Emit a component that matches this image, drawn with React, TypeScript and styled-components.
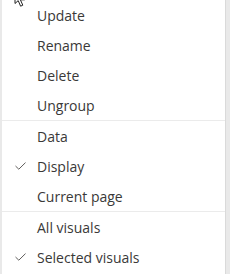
import styled, { createGlobalStyle } from 'styled-components'

const GlobalStyle = createGlobalStyle`
  html, body {
    margin: 0;
    padding: 0;
    background: #e6e6e6;
  }
  body {
    font-family: 'Segoe UI', 'Open Sans', 'Liberation Sans', sans-serif;
  }
`

const Frame = styled.div`
  position: relative;
  width: 230px;
  height: 274px;
  overflow: hidden;
  background: #e9e9e9;
  padding: 0 4px 0 2px;
  box-sizing: border-box;
`

const Menu = styled.ul`
  list-style: none;
  margin: 0;
  padding: 0;
  height: 100%;
  background: #ffffff;
  border-right: 1px solid #dadada;
`

const Section = styled.li`
  border-bottom: 1px solid #ebebeb;
  &:last-child {
    border-bottom: none;
  }
`

const Items = styled.ul`
  list-style: none;
  margin: 0;
  padding: 0;
`

const Item = styled.li`
  display: flex;
  align-items: center;
  height: 30px;
  font-size: 14px;
  color: #3a3938;
  cursor: default;
`

const CheckSlot = styled.span`
  width: 34px;
  display: flex;
  justify-content: center;
  padding-left: 1px;
`

const Cursor = styled.svg`
  position: absolute;
  left: 14px;
  top: -11px;
`

type Entry = { label: string; checked?: boolean }

const sections: Entry[][] = [
  [{ label: 'Update' }, { label: 'Rename' }, { label: 'Delete' }, { label: 'Ungroup' }],
  [{ label: 'Data' }, { label: 'Display', checked: true }, { label: 'Current page' }],
  [{ label: 'All visuals' }, { label: 'Selected visuals', checked: true }],
]

function Check() {
  return (
    <svg width="11" height="8" viewBox="0 0 11 8">
      <path d="M0.5 4 L3.8 7.2 L10.5 0.6" fill="none" stroke="#605e5c" strokeWidth="1" />
    </svg>
  )
}

export default function App() {
  return (
    <>
      <GlobalStyle />
      <Frame>
        <Menu>
          {sections.map((items, i) => (
            <Section key={i}>
              <Items>
                {items.map((item) => (
                  <Item key={item.label}>
                    <CheckSlot>{item.checked && <Check />}</CheckSlot>
                    {item.label}
                  </Item>
                ))}
              </Items>
            </Section>
          ))}
        </Menu>
        <Cursor width="14" height="19" viewBox="0 0 14 19">
          <path
            d="M1 1 L1 14.5 L4.2 11.6 L6.6 17.2 L8.8 16.2 L6.4 10.8 L10.8 10.8 Z"
            fill="#fff"
            stroke="#222"
            strokeWidth="1"
            strokeLinejoin="round"
          />
        </Cursor>
      </Frame>
    </>
  )
}
